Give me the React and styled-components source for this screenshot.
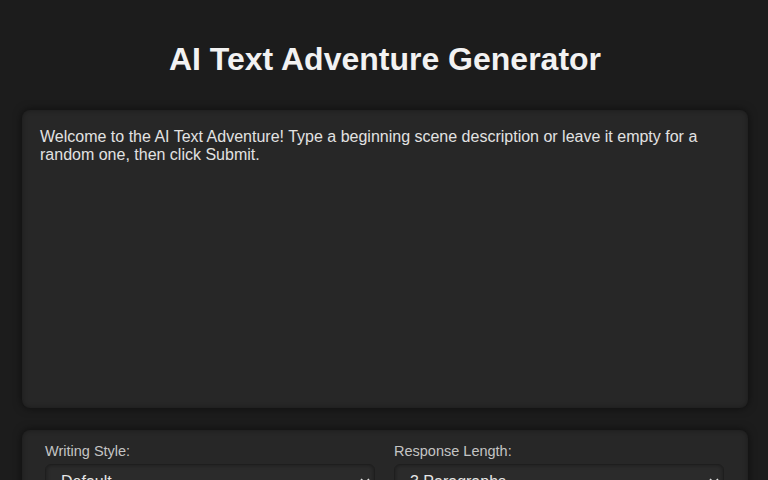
import styled, { createGlobalStyle } from "styled-components";

const GlobalStyle = createGlobalStyle`
  body {
    margin: 0;
    background: #1c1c1c;
    font-family: "Liberation Sans", Arial, sans-serif;
    color: #e0e0e0;
  }
`;

export default function App() {
  return (
    <>
      <GlobalStyle />
      <Page>
        <Title>AI Text Adventure Generator</Title>
        <StoryPanel>
          Welcome to the AI Text Adventure! Type a beginning scene description or
          leave it empty for a random one, then click Submit.
        </StoryPanel>
        <ControlsPanel>
          <Field>
            <Label>Writing Style:</Label>
            <Select defaultValue="Default">
              <option>Default</option>
            </Select>
          </Field>
          <Field>
            <Label>Response Length:</Label>
            <Select defaultValue="3 Paragraphs">
              <option>3 Paragraphs</option>
            </Select>
          </Field>
        </ControlsPanel>
      </Page>
    </>
  );
}

const Page = styled.div`
  display: flex;
  flex-direction: column;
  padding: 0 20px 40px 22px;
`;

const Title = styled.h1`
  margin: 41px 0 32px;
  text-align: center;
  font-size: 32px;
  font-weight: bold;
  color: #f2f2f2;
`;

const Panel = styled.div`
  background: #272727;
  border-radius: 8px;
  box-shadow: 0 0 8px rgba(0, 0, 0, 0.55), inset 0 0 5px rgba(0, 0, 0, 0.35);
`;

const StoryPanel = styled(Panel)`
  height: 298px;
  box-sizing: border-box;
  padding: 18px 18px;
  font-size: 16px;
  line-height: 18px;
  color: #e2e2e2;
`;

const ControlsPanel = styled(Panel)`
  margin-top: 22px;
  padding: 13px 24px 20px 23px;
  display: grid;
  grid-template-columns: 1fr 1fr;
  column-gap: 19px;
`;

const Field = styled.div`
  display: flex;
  flex-direction: column;
`;

const Label = styled.label`
  font-size: 14.5px;
  line-height: 16px;
  color: #c4c4c4;
  margin-bottom: 5px;
`;

const Select = styled.select`
  appearance: none;
  height: 34px;
  padding: 0 15px;
  font-family: "Liberation Sans", Arial, sans-serif;
  font-size: 16px;
  color: #e6e6e6;
  background-color: #2b2b2b;
  background-image: url("data:image/svg+xml;utf8,<svg xmlns='http://www.w3.org/2000/svg' width='10' height='6' viewBox='0 0 10 6'><path d='M1 1l4 4 4-4' fill='none' stroke='%23dddddd' stroke-width='1.6'/></svg>");
  background-repeat: no-repeat;
  background-position: right 4px center;
  border: 1px solid #1e1e1e;
  border-radius: 6px;
  box-shadow: inset 0 0 4px rgba(0, 0, 0, 0.4);
`;
